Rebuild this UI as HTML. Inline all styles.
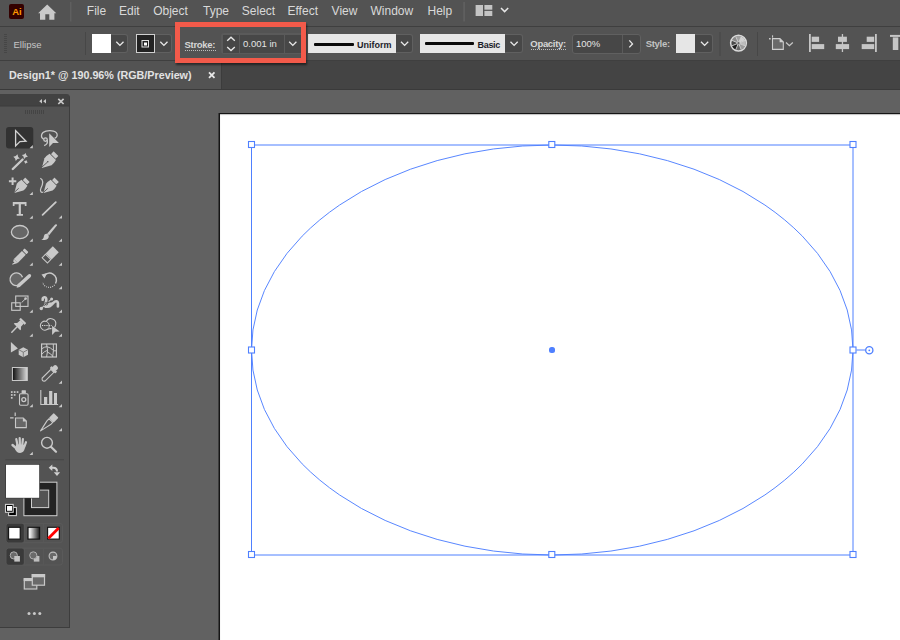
<!DOCTYPE html>
<html><head><meta charset="utf-8">
<style>
*{margin:0;padding:0;box-sizing:border-box}
html,body{width:900px;height:640px;overflow:hidden;background:#616161;font-family:"Liberation Sans",sans-serif;position:relative}
.a{position:absolute}
.menu{top:4px;font-size:12px;line-height:14px;color:#d9d9d9;white-space:nowrap}
.lbl{font-size:9.5px;font-weight:bold;line-height:12px;color:#d6d6d6;white-space:nowrap;letter-spacing:-0.3px}
.dd{background:#474747;border:1px solid #606060;border-radius:3px}
.cell{background:#474747}
</style></head><body>
<!-- bars -->
<div class="a" style="left:0;top:0;width:900px;height:26px;background:#535353"></div>
<div class="a" style="left:0;top:26px;width:900px;height:1px;background:#3f3f3f"></div>
<div class="a" style="left:0;top:27px;width:900px;height:33px;background:#535353"></div>
<div class="a" style="left:0;top:60px;width:900px;height:1px;background:#3f3f3f"></div>
<div class="a" style="left:0;top:61px;width:900px;height:28px;background:#444444"></div>
<div class="a" style="left:0;top:61px;width:222px;height:28px;background:#535353;border-right:1px solid #3c3c3c"></div>
<div class="a" style="left:0;top:89px;width:900px;height:1px;background:#3a3a3a"></div>

<!-- artboard div -->
<div class="a" style="left:219px;top:113px;width:700px;height:560px;background:#fff;border-left:1px solid #151515;border-top:1px solid #151515;box-shadow:-1px 0 0 #3c3c3c, inset 0 1px 1px rgba(0,0,0,0.25)"></div>

<!-- tools panel bg -->
<div class="a" style="left:0;top:94px;width:70px;height:534px;background:#535353;border-right:1px solid #3d3d3d;border-bottom:1px solid #3d3d3d;border-top-right-radius:4px"></div>
<div class="a" style="left:0;top:94px;width:69px;height:12px;background:#424242;border-top-right-radius:3px"></div>

<!-- menu -->
<div class="a" style="left:9px;top:4px;width:15px;height:15px;background:#330000;border-radius:2px"></div>
<div class="a" style="left:11px;top:5px;width:12px;font-size:9.5px;font-weight:bold;line-height:13px;color:#ff9a00;text-align:center">Ai</div>
<div class="a menu" style="left:86.8px">File</div>
<div class="a menu" style="left:119px">Edit</div>
<div class="a menu" style="left:153.2px">Object</div>
<div class="a menu" style="left:203px">Type</div>
<div class="a menu" style="left:241.8px">Select</div>
<div class="a menu" style="left:287.5px">Effect</div>
<div class="a menu" style="left:331.6px">View</div>
<div class="a menu" style="left:370.5px">Window</div>
<div class="a menu" style="left:427.5px">Help</div>

<!-- options bar -->
<div class="a" style="left:13.5px;top:38.8px;font-size:9.5px;line-height:12px;color:#c6c6c6">Ellipse</div>
<div class="a" style="left:92px;top:34px;width:19px;height:19px;background:#fff"></div>
<div class="a dd" style="left:111px;top:34px;width:17px;height:19px;border-left:none;border-radius:0 3px 3px 0"></div>
<div class="a" style="left:136px;top:34px;width:19px;height:19px;background:#222;border:1px solid #cfcfcf"></div>
<div class="a dd" style="left:155px;top:34px;width:17px;height:19px;border-left:none;border-radius:0 3px 3px 0"></div>

<div class="a lbl" style="left:184.5px;top:38.8px">Stroke:</div>
<div class="a" style="left:221px;top:33px;width:86px;height:21px;background:#5a5a5a;border-radius:3px"></div>
<div class="a cell" style="left:223px;top:35px;width:16px;height:18px"></div>
<div class="a cell" style="left:240px;top:35px;width:44px;height:18px"></div>
<div class="a cell" style="left:285px;top:35px;width:20px;height:18px"></div>
<div class="a" style="left:243px;top:38px;font-size:9.5px;line-height:12px;color:#e4e4e4">0.001 in</div>

<div class="a" style="left:308px;top:34px;width:88px;height:19px;background:#e6e6e6"></div>
<div class="a" style="left:314px;top:43px;width:40px;height:3px;background:#0a0a0a;border-radius:1px"></div>
<div class="a" style="left:357px;top:40.2px;font-size:9px;font-weight:bold;line-height:11px;color:#1c1c2a">Uniform</div>
<div class="a dd" style="left:396px;top:34px;width:17px;height:19px;border-left:none;border-radius:0 3px 3px 0"></div>

<div class="a" style="left:420px;top:34px;width:85px;height:19px;background:#e6e6e6"></div>
<div class="a" style="left:425px;top:42px;width:49px;height:3px;background:#0a0a0a;border-radius:1px"></div>
<div class="a" style="left:477.5px;top:39.6px;font-size:9px;font-weight:bold;line-height:11px;color:#1c1c2a;letter-spacing:-0.3px">Basic</div>
<div class="a dd" style="left:505px;top:34px;width:18px;height:19px;border-left:none;border-radius:0 3px 3px 0"></div>

<div class="a lbl" style="left:530.3px;top:37.8px">Opacity:</div>
<div class="a dd" style="left:572px;top:33.5px;width:69px;height:20px"></div>
<div class="a" style="left:622px;top:35px;width:1px;height:18px;background:#5b5b5b"></div>
<div class="a" style="left:576px;top:38px;font-size:9.5px;line-height:12px;color:#e4e4e4">100%</div>

<div class="a lbl" style="left:645.7px;top:37.8px;color:#c2c2c2">Style:</div>
<div class="a" style="left:676px;top:34px;width:19px;height:19px;background:#e6e6e6"></div>
<div class="a dd" style="left:695px;top:34px;width:18px;height:19px;border-left:none;border-radius:0 3px 3px 0"></div>

<!-- tab -->
<div class="a" style="left:9px;top:68.7px;font-size:10.75px;font-weight:bold;line-height:13px;color:#e2e2e2;white-space:nowrap">Design1* @ 190.96% (RGB/Preview)</div>

<!-- red highlight -->
<div class="a" style="left:175px;top:22px;width:131px;height:41px;border:5px solid #f35a4a;box-shadow:1px 2px 2px rgba(0,0,0,0.5)"></div>
<svg class="a" style="left:0;top:0" width="900" height="640">
 <!-- home -->
 <path d="M47.2 4.4 L56.3 13.3 L54.4 13.3 L54.4 19.7 L49.3 19.7 L49.3 14.3 L45.3 14.3 L45.3 19.7 L40 19.7 L40 13.3 L38.1 13.3 Z" fill="#c9c9c9"/>
 <rect x="70" y="2" width="1.5" height="19.5" fill="#5f5f5f"/>
 <rect x="463.2" y="2" width="1.8" height="19.5" fill="#5f5f5f"/>
 <!-- workspace -->
 <rect x="475.6" y="5" width="7.4" height="11" fill="#c4c4c4"/>
 <rect x="484.4" y="5" width="7.9" height="4.7" fill="#c4c4c4"/>
 <rect x="484.4" y="10.9" width="7.9" height="5.1" fill="#c4c4c4"/>
 <path d="M501 8 L504.6 11.6 L508.2 8" fill="none" stroke="#e6e6e6" stroke-width="1.5"/>

 <!-- options grip -->
 <g fill="#464646">
  <rect x="4" y="34" width="3" height="1"/><rect x="4" y="36" width="3" height="1"/><rect x="4" y="38" width="3" height="1"/><rect x="4" y="40" width="3" height="1"/><rect x="4" y="42" width="3" height="1"/><rect x="4" y="44" width="3" height="1"/><rect x="4" y="46" width="3" height="1"/><rect x="4" y="48" width="3" height="1"/><rect x="4" y="50" width="3" height="1"/><rect x="4" y="52" width="3" height="1"/>
 </g>
 <rect x="85" y="32" width="1" height="23" fill="#474747"/>
 <!-- stroke swatch icon -->
 <rect x="142" y="40.5" width="6.5" height="6.5" fill="none" stroke="#e0e0e0" stroke-width="1"/>
 <rect x="144" y="42.5" width="3" height="3" fill="#fff"/>
 <!-- chevrons -->
 <g fill="none" stroke="#e8e8e8" stroke-width="1.35">
  <path d="M116.3 41.8 L119.9 45.4 L123.5 41.8"/>
  <path d="M160.3 41.8 L163.9 45.4 L167.5 41.8"/>
  <path d="M227.2 40.8 L231 37.2 L234.8 40.8"/>
  <path d="M227.2 46.9 L231 50.5 L234.8 46.9"/>
  <path d="M289.2 41.8 L292.8 45.4 L296.4 41.8"/>
  <path d="M401 41.8 L404.6 45.4 L408.2 41.8"/>
  <path d="M510.5 41.8 L514.1 45.4 L517.7 41.8"/>
  <path d="M629.3 40.4 L632.5 43.9 L629.3 47.4"/>
  <path d="M701 41.8 L704.6 45.4 L708.2 41.8"/>
  <path d="M786 42.5 L789.4 45.7 L792.8 42.5" stroke="#c8c8c8" stroke-width="1.3"/>
 </g>
 <!-- dotted underlines -->
 <line x1="185" y1="50.5" x2="216" y2="50.5" stroke="#bdbdbd" stroke-width="1" stroke-dasharray="1 1"/>
 <line x1="531" y1="49.5" x2="567" y2="49.5" stroke="#bdbdbd" stroke-width="1" stroke-dasharray="1 1"/>
 <!-- separators -->
 <rect x="719.5" y="32" width="1" height="24" fill="#474747"/>
 <rect x="757" y="32" width="1" height="24" fill="#474747"/>
 <!-- recolor -->
<path d="M738.5 43.1 L735.74 36.45 A7.2 7.2 0 0 1 741.26 36.45 Z" fill="#a0a0a0"/>
<path d="M738.5 43.1 L741.26 36.45 A7.2 7.2 0 0 1 745.15 40.34 Z" fill="#d2d2d2"/>
<path d="M738.5 43.1 L745.15 40.34 A7.2 7.2 0 0 1 745.15 45.86 Z" fill="#bcbcbc"/>
<path d="M738.5 43.1 L745.15 45.86 A7.2 7.2 0 0 1 741.26 49.75 Z" fill="#9c9c9c"/>
<path d="M738.5 43.1 L741.26 49.75 A7.2 7.2 0 0 1 735.74 49.75 Z" fill="#6a6a6a"/>
<path d="M738.5 43.1 L735.74 49.75 A7.2 7.2 0 0 1 731.85 45.86 Z" fill="#202020"/>
<path d="M738.5 43.1 L731.85 45.86 A7.2 7.2 0 0 1 731.85 40.34 Z" fill="#4a4a4a"/>
<path d="M738.5 43.1 L731.85 40.34 A7.2 7.2 0 0 1 735.74 36.45 Z" fill="#8a8a8a"/>
<path d="M737.89 41.62 L735.74 36.45 M739.11 41.62 L741.26 36.45 M739.98 42.49 L745.15 40.34 M739.98 43.71 L745.15 45.86 M739.11 44.58 L741.26 49.75 M737.89 44.58 L735.74 49.75 M737.02 43.71 L731.85 45.86 M737.02 42.49 L731.85 40.34" stroke="#d6d6d6" stroke-width="0.9" fill="none"/>
<circle cx="738.5" cy="43.1" r="1.6" fill="#6a6a6a" stroke="#d6d6d6" stroke-width="0.8"/>
<circle cx="738.5" cy="43.1" r="7.9" fill="none" stroke="#dadada" stroke-width="1.5"/>
 <!-- artboard options icon -->
 <path d="M772.5 38.6 L779.9 38.6 L783.3 42 L783.3 49.4 L772.5 49.4 Z" fill="#6a6a6a" stroke="#cfcfcf" stroke-width="1.1"/>
 <path d="M779.6 38.3 L783.6 42.3 L779.6 42.3 Z" fill="#cfcfcf"/>
 <rect x="769" y="38" width="1.7" height="1.5" fill="#c8c8c8"/>
 <rect x="772" y="35.3" width="1.1" height="2.3" fill="#c8c8c8"/>
 <!-- align -->
 <g fill="#c6c6c6">
  <rect x="809" y="34" width="1.8" height="18"/>
  <rect x="811.7" y="36.7" width="7.4" height="5.2"/>
  <rect x="811.7" y="44.1" width="12.5" height="5"/>
  <rect x="841.8" y="34" width="1.3" height="18"/>
  <rect x="838" y="36.7" width="8.9" height="5.2"/>
  <rect x="835.8" y="44.1" width="13.3" height="5"/>
  <rect x="875" y="34" width="1.8" height="18"/>
  <rect x="866.7" y="36.7" width="7.5" height="5.2"/>
  <rect x="861.7" y="44.1" width="12.5" height="5"/>
  <rect x="890" y="34.9" width="10" height="2"/>
  <rect x="892.8" y="37.4" width="5.5" height="12.6"/>
 </g>

 <!-- tab close -->
 <path d="M209 72.3 L214.5 77.8 M214.5 72.3 L209 77.8" stroke="#e8e8e8" stroke-width="1.8"/>

 <!-- panel header -->
 <path d="M42 99 L39.2 101.2 L42 103.4 Z M46 99 L43.2 101.2 L46 103.4 Z" fill="#c8c8c8"/>
 <path d="M58.3 98.8 L63.6 104 M63.6 98.8 L58.3 104" stroke="#c8c8c8" stroke-width="1.7"/>
 <rect x="0" y="105.5" width="69" height="1" fill="#3d3d3d"/>
 <g fill="#444444"><rect x="25" y="110" width="1" height="4"/><rect x="27" y="110" width="1" height="4"/><rect x="29" y="110" width="1" height="4"/><rect x="31" y="110" width="1" height="4"/><rect x="33" y="110" width="1" height="4"/><rect x="35" y="110" width="1" height="4"/><rect x="37" y="110" width="1" height="4"/><rect x="39" y="110" width="1" height="4"/><rect x="41" y="110" width="1" height="4"/><rect x="43" y="110" width="1" height="4"/></g>

 <!-- selection overlay -->
 <g fill="none" stroke="#4f80ff">
  <rect x="251.5" y="145" width="601.5" height="410" stroke-width="1"/>
  <ellipse cx="552.25" cy="350" rx="300.75" ry="205" stroke-width="0.95"/>
  <line x1="856.5" y1="350" x2="865.5" y2="350" stroke-width="1"/>
  <circle cx="869.3" cy="350.3" r="3.6" stroke-width="1.3"/>
 </g>
 <circle cx="869.3" cy="350.3" r="0.9" fill="#4f80ff"/>
 <g fill="#fff" stroke="#4f80ff" stroke-width="1.1">
  <rect x="248.5" y="141.5" width="6" height="6"/>
  <rect x="548.8" y="141.5" width="6" height="6"/>
  <rect x="850" y="141.5" width="6" height="6"/>
  <rect x="248.5" y="347" width="6" height="6"/>
  <rect x="850" y="347" width="6" height="6"/>
  <rect x="248.5" y="551.5" width="6" height="6"/>
  <rect x="548.8" y="551.5" width="6" height="6"/>
  <rect x="850" y="551.5" width="6" height="6"/>
 </g>
 <rect x="549" y="347" width="6" height="6" rx="2.5" fill="#4f80ff"/>
</svg>
<svg class="a" style="left:0;top:0" width="70" height="640">
 <defs>
  <linearGradient id="gr1" x1="0" x2="1" y1="0" y2="0"><stop offset="0" stop-color="#0c0c0c"/><stop offset="1" stop-color="#dcdcdc"/></linearGradient>
  <linearGradient id="gr2" x1="0" x2="1" y1="0" y2="0"><stop offset="0" stop-color="#9a9a9a"/><stop offset="0.15" stop-color="#f4f4f4"/><stop offset="1" stop-color="#1a1a1a"/></linearGradient>
  <path id="tri" d="M0 -3.3 L0 0 L-3.3 0 Z"/>
  <g id="nib">
   <rect x="-3.3" y="-10.4" width="6.6" height="3.8" rx="0.3"/>
   <path d="M-4.5 -5.9 L4.5 -5.9 Q5.6 -1.5 5 0.8 L0 9.6 L-5 0.8 Q-5.6 -1.5 -4.5 -5.9 Z"/>
  </g>
 </defs>
 <rect x="6" y="127" width="27.3" height="21.5" rx="3" fill="#323232"/>
 <g fill="#c9c9c9">
  <use href="#tri" x="32.8" y="148.2"/>
  <use href="#tri" x="32.8" y="195"/>
  <use href="#tri" x="32.8" y="218.8"/>
  <use href="#tri" x="62" y="218.6"/>
  <use href="#tri" x="32.8" y="241.8"/>
  <use href="#tri" x="62" y="241.8"/>
  <use href="#tri" x="32.8" y="265.7"/>
  <use href="#tri" x="62" y="265.7"/>
  <use href="#tri" x="62" y="289.2"/>
  <use href="#tri" x="32.8" y="312.7"/>
  <use href="#tri" x="62" y="312.7"/>
  <use href="#tri" x="32.8" y="336.8"/>
  <use href="#tri" x="62" y="336.8"/>
  <use href="#tri" x="62" y="383.8"/>
  <use href="#tri" x="32.8" y="407.3"/>
  <use href="#tri" x="62" y="407.3"/>
  <use href="#tri" x="62" y="431.2"/>
  <use href="#tri" x="32.8" y="455"/>
 </g>
 <!-- selection -->
 <path d="M15.6 130.6 L15.6 146 L19.9 141.6 L26 141.2 Z" fill="#323232" stroke="#d2d2d2" stroke-width="1.3" stroke-linejoin="miter"/>
 <!-- lasso select -->
 <path d="M43.6 139.2 C40.2 137.5 40.8 132.3 46 131.1 C51 130 57.2 131 57.2 135 C57.2 136.8 56 137.8 54.5 138.4" fill="none" stroke="#c9c9c9" stroke-width="1.2"/>
 <circle cx="45.5" cy="139.6" r="1.8" fill="#676767" stroke="#c9c9c9" stroke-width="1.3"/>
 <path d="M47.1 140 C47.9 142.6 47 144.6 44.2 145.6" fill="none" stroke="#c9c9c9" stroke-width="1.3"/>
 <path d="M48.3 132.6 L59.6 143.3 L53.3 143.6 L48.3 147.6 Z" fill="#535353"/>
 <path d="M49.2 133.3 L58.9 142.9 L53 143 L49.2 147 Z" fill="#c9c9c9"/>
 <!-- magic wand -->
 <line x1="12.8" y1="169" x2="22.6" y2="159.5" stroke="#c9c9c9" stroke-width="2.4" stroke-linecap="round"/>
 <path transform="translate(16.6 157.6) rotate(15)" d="M0 -3.4 Q0.75 -0.75 3.4 0 Q0.75 0.75 0 3.4 Q-0.75 0.75 -3.4 0 Q-0.75 -0.75 0 -3.4 Z" fill="#c9c9c9"/>
 <path transform="translate(24.9 155.9) rotate(15)" d="M0 -3.1 Q0.75 -0.75 3.1 0 Q0.75 0.75 0 3.1 Q-0.75 0.75 -3.1 0 Q-0.75 -0.75 0 -3.1 Z" fill="#c9c9c9"/>
 <path transform="translate(25.8 161.9) rotate(15)" d="M0 -2.0 Q0.7 -0.7 2.0 0 Q0.7 0.7 0 2.0 Q-0.7 0.7 -2.0 0 Q-0.7 -0.7 0 -2.0 Z" fill="#c9c9c9"/>
 <!-- pen -->
 <g transform="translate(48.6 161.1) rotate(45)" fill="#c9c9c9"><use href="#nib"/></g>
 <line x1="41.8" y1="167.2" x2="47.4" y2="162.2" stroke="#535353" stroke-width="0.9"/>
 <circle cx="47.8" cy="161.8" r="0.8" fill="#535353"/>
 <!-- add anchor pen -->
 <path d="M12.6 177.5 V184.9 M8.9 181.2 H16.3" stroke="#c9c9c9" stroke-width="2"/>
 <g transform="translate(20.6 186.6) rotate(45) scale(0.93)" fill="#c9c9c9"><use href="#nib"/></g>
 <line x1="13.9" y1="192.7" x2="18.7" y2="188.3" stroke="#535353" stroke-width="0.9"/>
 <!-- curvature pen -->
 <path d="M40.3 178.3 C44.5 180.5 42.5 185 41 188 C39.6 191 41 193.2 43.5 192" fill="none" stroke="#c9c9c9" stroke-width="1.2"/>
 <g transform="translate(49.8 186.6) rotate(45) scale(0.93)" fill="#c9c9c9"><use href="#nib"/></g>
 <line x1="43.1" y1="192.7" x2="47.9" y2="188.3" stroke="#535353" stroke-width="0.9"/>
 <!-- type -->
 <path d="M12.8 202.1 H26.5 V206 H24.8 V204.2 H20.9 V214.1 H23 V215.8 H16.7 V214.1 H18.7 V204.2 H14.5 V206 H12.8 Z" fill="#c9c9c9"/>
 <!-- line -->
 <line x1="42.6" y1="214.9" x2="55.8" y2="202.2" stroke="#c9c9c9" stroke-width="1.8" stroke-linecap="round"/>
 <!-- ellipse -->
 <ellipse cx="19.85" cy="232.1" rx="8.5" ry="6.6" fill="#676767" stroke="#c9c9c9" stroke-width="1.3"/>
 <!-- paintbrush -->
 <path d="M47.2 233.6 L55.2 224.5 Q57.2 223.4 56.9 225.6 L49.1 235.3 Z" fill="#c9c9c9"/>
 <path d="M48.6 235.2 C47.6 232.9 44.3 233.4 43.9 236.2 C43.6 238.4 42.6 239.4 41.2 239.9 L44.8 239.9 C47.6 239.8 49.4 237.8 48.6 235.2 Z" fill="#c9c9c9"/>
 <!-- pencil -->
 <g transform="translate(19.2 257.6) rotate(45)" fill="#c9c9c9">
  <rect x="-2.7" y="-10.4" width="5.4" height="2.9" rx="0.8"/>
  <rect x="-2.7" y="-6.6" width="5.4" height="11.4"/>
  <path d="M-2.7 4.8 L2.7 4.8 L0 10 Z"/>
 </g>
 <path d="M11.9 263.4 L12.6 260.8 L14.5 262.7 Z" fill="#535353"/>
 <!-- eraser -->
 <g transform="translate(49.8 255.3) rotate(45) scale(0.92)">
  <rect x="-4.6" y="-9.2" width="9.2" height="11" fill="#c9c9c9"/>
  <rect x="-4.1" y="2.5" width="8.2" height="5.2" fill="#535353" stroke="#c9c9c9" stroke-width="1.1"/>
 </g>
 <!-- shaper -->
 <path d="M17.6 285.6 A6.4 6.4 0 1 1 22.5 277.2 L17.6 285.6 Z" fill="#676767" stroke="none"/>
 <path d="M17.6 285.6 A6.4 6.4 0 1 1 22.5 277.2" fill="none" stroke="#c9c9c9" stroke-width="1.3"/>
 <path d="M16.6 287.8 L17.3 284.5 L28.3 274.4 Q29.7 273.4 30.8 274.6 Q31.6 275.8 30.7 277 L19.7 287.1 Z" fill="#c9c9c9"/>
 <!-- rotate -->
 <path d="M43.5 276.6 A6.9 6.9 0 1 1 55.5 283.5" fill="none" stroke="#c9c9c9" stroke-width="1.5"/>
 <path d="M41.5 274.6 L47.2 273 L44.5 278.4 Z" fill="#c9c9c9"/>
 <path d="M54.6 284.8 A6.9 6.9 0 0 1 42.6 282.5" fill="none" stroke="#c9c9c9" stroke-width="1.1" stroke-dasharray="1 1.1"/>
 <!-- scale -->
 <rect x="15.7" y="296" width="12.3" height="10.4" fill="none" stroke="#c9c9c9" stroke-width="1.1"/>
 <rect x="11.7" y="302.8" width="8.5" height="7.5" fill="none" stroke="#c9c9c9" stroke-width="1.1"/>
 <line x1="21.6" y1="302.6" x2="25.3" y2="299" stroke="#c9c9c9" stroke-width="1"/>
 <circle cx="25.6" cy="298.6" r="1.3" fill="#c9c9c9"/>
 <!-- warp -->
 <path d="M42.7 299.8 C42.4 296.6 46.3 296.2 46.3 299.4 C46.3 301.6 45.3 303.6 45.6 306.2" fill="none" stroke="#c9c9c9" stroke-width="2.6" stroke-linecap="round"/>
 <path d="M45.3 306.6 C49 307.4 51.6 305 53.6 302.6 C55.2 300.8 57.6 300.6 57.9 303.2 L57.9 306.4" fill="none" stroke="#c9c9c9" stroke-width="2.6" stroke-linecap="round"/>
 <path d="M44.6 304.2 L49.8 302.6 L53.6 302.4 L50.6 307.2 L45.2 308 Z" fill="#c9c9c9"/>
 <circle cx="51.6" cy="298.9" r="1.5" fill="#c9c9c9"/>
 <line x1="42.2" y1="307.6" x2="50.6" y2="299.8" stroke="#535353" stroke-width="0.9"/>
 <circle cx="46.4" cy="303.7" r="1.3" fill="none" stroke="#535353" stroke-width="0.9"/>
 <circle cx="41.3" cy="308.5" r="1.7" fill="#c9c9c9"/>
 <path d="M41.3 308.5 L44.3 305.7 M48.6 301.7 L51.6 298.9" stroke="#c9c9c9" stroke-width="1.1"/>
 <!-- puppet pin -->
 <g transform="translate(17.4 326.6) rotate(45) scale(0.9)" fill="#c9c9c9">
  <rect x="-4.3" y="-9.6" width="8.6" height="2.6" rx="0.6"/>
  <path d="M-2.6 -7.2 L2.6 -7.2 L3 -2.6 L5 -0.6 L5 0.6 L-5 0.6 L-5 -0.6 L-3 -2.6 Z"/>
  <rect x="-0.8" y="0" width="1.6" height="9.6" rx="0.8"/>
 </g>
 <!-- shape builder -->
 <path d="M46.3 321.4 A5 5 0 1 1 50.2 328.6 L47 329.6 A4.5 4.5 0 1 1 46.3 321.4 Z" fill="none" stroke="#c9c9c9" stroke-width="1.1"/>
 <path d="M46.6 321.6 A4.5 4.5 0 0 1 47.4 329.4" fill="none" stroke="#c9c9c9" stroke-width="0.9"/>
 <path d="M42 325.5 H52" stroke="#dcdcdc" stroke-width="1.1" stroke-dasharray="1.2 1"/>
 <path d="M51.5 325 L60.4 332 L55.4 332.3 L51.5 336 Z" fill="#535353"/>
 <path d="M52.1 325.7 L59.7 331.6 L55.2 331.8 L52.1 335 Z" fill="#c9c9c9"/>
 <!-- live paint -->
 <path d="M10.9 342.1 L17.9 348.4 L10.9 352.6 Z" fill="#c9c9c9"/>
 <path d="M23.3 347.2 L28 349.7 L28 354.8 L23.3 357.3 L18.7 354.8 L18.7 349.7 Z" fill="#c9c9c9"/>
 <path d="M18.9 349.8 L23.3 352.2 L27.8 349.8 M23.3 352.2 V357" fill="none" stroke="#6a6a6a" stroke-width="0.8"/>
 <!-- mesh -->
 <rect x="41.6" y="344" width="14.8" height="13" fill="none" stroke="#c9c9c9" stroke-width="1.2"/>
 <path d="M53.3 344 Q54 350.5 52.6 357 M53.4 350.8 H56.4 M46.6 344 Q48.6 350.5 46.6 357 M41.6 348.8 Q44.5 346.8 47.2 346.6 M41.6 354.4 Q44.5 351 47.8 350.2 M47.4 346.8 Q50.5 347.5 53.4 350.4 M47.6 352.2 Q51 353.5 53 356.6" fill="none" stroke="#c9c9c9" stroke-width="1"/>
 <!-- gradient -->
 <rect x="12.4" y="367.5" width="14.9" height="13" fill="url(#gr1)" stroke="#c9c9c9" stroke-width="1"/>
 <!-- eyedropper -->
 <g transform="translate(49.3 373.9) rotate(45)">
  <rect x="-2.6" y="-11" width="5.2" height="4.8" rx="2.2" fill="#c9c9c9"/>
  <rect x="-3.9" y="-7.2" width="7.8" height="2.8" rx="0.8" fill="#c9c9c9"/>
  <path d="M-2.1 -4.4 L2.1 -4.4 L2.1 8 Q0 11 -2.1 8 Z" fill="none" stroke="#c9c9c9" stroke-width="1.1"/>
 </g>
 <!-- symbol sprayer -->
 <g fill="#c9c9c9">
  <rect x="10.9" y="391.2" width="1.7" height="1.7"/><rect x="13.8" y="391.2" width="1.7" height="1.7"/><rect x="16.7" y="391.2" width="1.7" height="1.7"/>
  <rect x="10.9" y="394.1" width="1.7" height="1.7"/><rect x="13.8" y="394.1" width="1.7" height="1.7"/>
  <rect x="10.9" y="397" width="1.7" height="1.7"/>
  <rect x="21.6" y="390.2" width="4.3" height="3.2" rx="0.5"/>
 </g>
 <rect x="19.5" y="393.8" width="8.6" height="11.4" rx="1.2" fill="none" stroke="#c9c9c9" stroke-width="1.1"/>
 <circle cx="23.8" cy="399.6" r="2" fill="none" stroke="#c9c9c9" stroke-width="1.3"/>
 <!-- graph -->
 <path d="M40.8 390 V404.5 H58.1" fill="none" stroke="#c9c9c9" stroke-width="1.1"/>
 <rect x="44" y="397" width="3.2" height="7.5" fill="#c9c9c9"/>
 <rect x="49.1" y="391" width="3.2" height="13.5" fill="#c9c9c9"/>
 <rect x="54" y="393" width="3" height="11.5" fill="#c9c9c9"/>
 <!-- artboard -->
 <path d="M15.5 418 L23.2 418 L26.3 421.1 L26.3 427.6 L15.5 427.6 Z" fill="#676767" stroke="#c9c9c9" stroke-width="1.1"/>
 <path d="M22.9 417.6 L26.7 421.4 L22.9 421.4 Z" fill="#c9c9c9"/>
 <path d="M15.2 412.4 V416 M10.1 417.9 H13.6" stroke="#c9c9c9" stroke-width="1.2"/>
 <!-- slice -->
 <g transform="translate(49.5 422) rotate(45)">
  <path d="M-2.6 -2 L2.6 -2 L2.6 1 L0 12.6 L-2.6 1 Z" fill="#535353" stroke="#c9c9c9" stroke-width="1.1" stroke-linejoin="round"/>
  <rect x="-3.3" y="-9.3" width="6.6" height="6.8" rx="0.6" fill="#c9c9c9"/>
 </g>
 <!-- hand -->
 <g stroke="#c9c9c9" stroke-linecap="round" fill="none">
  <path d="M16.3 439.2 L17.6 445.5" stroke-width="2.2"/>
  <path d="M19.7 438 L19.9 445.5" stroke-width="2.2"/>
  <path d="M22.9 439.1 L22.2 445.5" stroke-width="2.2"/>
  <path d="M26 442.2 L24.3 446.8" stroke-width="2.2"/>
  <path d="M12.5 445 L16.6 448.6" stroke-width="2.4"/>
 </g>
 <path d="M16.2 444.2 L25 444.8 L24.8 448.6 C24.2 451.2 22.6 452.9 20.1 452.9 C17.6 452.9 16.2 451.6 15 449.2 Z" fill="#c9c9c9"/>
 <!-- zoom -->
 <circle cx="47" cy="442.8" r="5.4" fill="none" stroke="#c9c9c9" stroke-width="1.4"/>
 <line x1="50.9" y1="446.8" x2="56" y2="451.8" stroke="#c9c9c9" stroke-width="2.2" stroke-linecap="round"/>
 <!-- separator -->
 <rect x="5.3" y="459.3" width="58.7" height="1" fill="#474747"/>
 <!-- stroke swatch -->
 <rect x="23.9" y="482.2" width="33" height="33.5" fill="#232323" stroke="#cfcfcf" stroke-width="1"/>
 <rect x="31.5" y="490.1" width="17.2" height="17.5" fill="#535353" stroke="#cfcfcf" stroke-width="1"/>
 <!-- fill swatch -->
 <rect x="5.3" y="464.1" width="34.6" height="34.3" fill="#3a3a3a"/>
 <rect x="6" y="464.8" width="33.2" height="33" fill="#ffffff"/>
 <!-- swap -->
 <path d="M51.6 467.7 L53.3 467.7 Q57 467.7 57 471.6" fill="none" stroke="#cfcfcf" stroke-width="2.1"/>
 <path d="M48.7 467.7 L52.3 464.5 L52.3 470.9 Z" fill="#cfcfcf"/>
 <path d="M57 476 L53.8 472.3 L60.1 472.3 Z" fill="#cfcfcf"/>
 <!-- default colors -->
 <rect x="8.6" y="507.5" width="7.8" height="8.1" fill="#000" stroke="#d0d0d0" stroke-width="1.1"/>
 <rect x="5.5" y="504.4" width="7.7" height="7.9" fill="#000" stroke="#d0d0d0" stroke-width="1.1"/>
 <rect x="7" y="506" width="5" height="4.8" fill="#fff"/>
 <!-- color mode row -->
 <rect x="6.2" y="523.4" width="56.3" height="19.3" rx="2.5" fill="#535353" stroke="#5a5a5a" stroke-width="1"/>
 <rect x="6.5" y="523.7" width="17.3" height="18.7" rx="2" fill="#3a3a3a"/>
 <rect x="24.3" y="524" width="0.8" height="18" fill="#5a5a5a"/>
 <rect x="43.3" y="524" width="0.8" height="18" fill="#5a5a5a"/>
 <rect x="8.6" y="527.3" width="11.6" height="11.8" fill="#fff" stroke="#111" stroke-width="1.1"/>
 <rect x="27.9" y="527.3" width="11.7" height="11.8" fill="url(#gr2)" stroke="#111" stroke-width="1.1"/>
 <rect x="47.6" y="527.3" width="11.7" height="11.8" fill="#fff" stroke="#111" stroke-width="1.1"/>
 <line x1="48.3" y1="538.6" x2="58.7" y2="527.9" stroke="#ff0000" stroke-width="2.8"/>
 <!-- draw mode row -->
 <rect x="6.2" y="548.2" width="56.3" height="16.8" rx="2.5" fill="#535353" stroke="#5a5a5a" stroke-width="1"/>
 <rect x="6.5" y="548.5" width="17.3" height="16.2" rx="2" fill="#3a3a3a"/>
 <rect x="24.3" y="549" width="0.8" height="15.5" fill="#5a5a5a"/>
 <rect x="43.3" y="549" width="0.8" height="15.5" fill="#5a5a5a"/>
 <circle cx="13.8" cy="555.4" r="3.6" fill="#6a6a6a" stroke="#b0b0b0" stroke-width="1"/>
 <rect x="14.3" y="556" width="5.6" height="5.6" fill="#c2c2c2"/>
 <rect x="33.8" y="556" width="5.6" height="5.6" fill="#bdbdbd"/>
 <circle cx="33.3" cy="555.4" r="3.6" fill="#6a6a6a" stroke="#b0b0b0" stroke-width="1"/>
 <circle cx="53" cy="556" r="3.9" fill="#6a6a6a" stroke="#bdbdbd" stroke-width="1.1"/>
 <path d="M53 556 L56.9 556 A3.9 3.9 0 0 1 53 559.9 Z" fill="#c4c4c4"/>
 <!-- screen mode -->
 <rect x="24.3" y="578.7" width="12.5" height="10.3" fill="#6a6a6a" stroke="#c9c9c9" stroke-width="1.2"/>
 <rect x="23.7" y="578.1" width="13.7" height="3" fill="#c9c9c9"/>
 <rect x="32.3" y="574.6" width="12.2" height="10.6" fill="#6a6a6a" stroke="#c9c9c9" stroke-width="1.2"/>
 <rect x="31.7" y="574" width="13.4" height="3.3" fill="#c9c9c9"/>
 <!-- dots -->
 <circle cx="29" cy="613.6" r="1.5" fill="#c9c9c9"/>
 <circle cx="34.4" cy="613.6" r="1.5" fill="#c9c9c9"/>
 <circle cx="39.8" cy="613.6" r="1.5" fill="#c9c9c9"/>
</svg>
</body></html>
